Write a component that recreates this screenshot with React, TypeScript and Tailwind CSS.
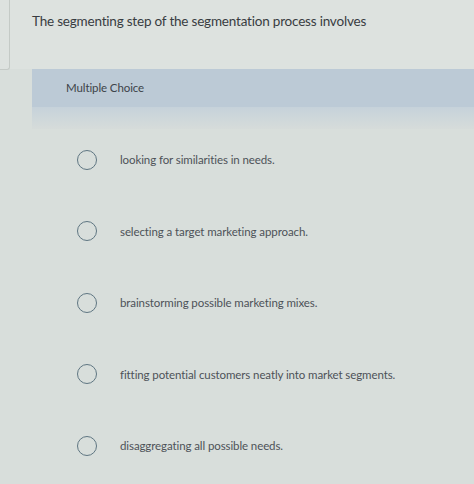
import React from 'react';

const choices = [
  'looking for similarities in needs.',
  'selecting a target marketing approach.',
  'brainstorming possible marketing mixes.',
  'fitting potential customers neatly into market segments.',
  'disaggregating all possible needs.',
];

export default function App() {
  return (
    <div
      className="relative w-[474px] h-[484px] overflow-hidden bg-[#d8dedb] text-[#3b4046]"
      style={{ fontFamily: 'Lato, "Open Sans", Arial, sans-serif' }}
    >
      {/* left tab edge */}
      <div className="absolute left-0 top-0 w-[10px] h-[70px] border-r border-b border-[#c4cac6] rounded-br-[3px]" />

      <div className="bg-[#dde2df] pt-[11px] pl-[32px] h-[69px]">
        <h1 className="text-[13.5px] tracking-[-0.2px] leading-[20px] text-[#383c41]">
          The segmenting step of the segmentation process involves
        </h1>
      </div>

      <div className="ml-[32px]">
        <div className="h-[38px] bg-[#bccad6] pl-[34px] flex items-center">
          <span className="text-[11.5px] tracking-[-0.1px] text-[#3d4349]">Multiple Choice</span>
        </div>
        <div className="h-[22px] bg-gradient-to-b from-[#c6d2da] to-[#d6dcda]" />
      </div>

      <div className="flex flex-col -mt-[5px]">
        {choices.map((c) => (
          <div key={c} className="flex items-center h-[71.5px] pl-[77px]">
            <div className="w-[20px] h-[20px] rounded-full border-[1.5px] border-[#5f7682] shrink-0" />
            <span className="ml-[23px] text-[11.5px] tracking-[-0.1px] text-[#4d5258]">{c}</span>
          </div>
        ))}
      </div>
    </div>
  );
}
